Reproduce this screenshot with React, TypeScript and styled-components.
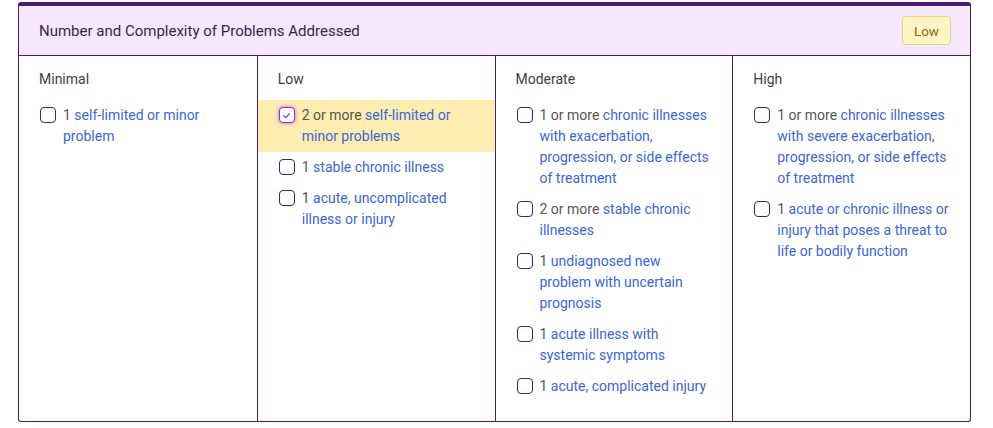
import React from "react";
import styled, { createGlobalStyle, css } from "styled-components";

const Global = createGlobalStyle`
  html, body { margin: 0; padding: 0; background: #ffffff; }
  body { font-family: Roboto, "Liberation Sans", Arial, sans-serif; }
  * { box-sizing: border-box; }
`;

const Page = styled.div`
  padding: 2px 22px 8px 18px;
`;

const Card = styled.section`
  border: 1px solid #4b1c71;
  border-top: 4px solid #4b1c71;
  border-radius: 3px;
  overflow: hidden;
  background: #fff;
`;

const Header = styled.header`
  display: flex;
  align-items: center;
  justify-content: space-between;
  height: 50px;
  padding: 0 19px 0 20px;
  background: #f5e7fc;
  border-bottom: 1px solid #4b1c71;
`;

const Title = styled.h2`
  margin: 0;
  font-size: 15px;
  font-weight: 400;
  color: #3a1f55;
`;

const Badge = styled.span`
  display: inline-flex;
  align-items: center;
  justify-content: center;
  height: 29px;
  padding: 0 11px;
  font-size: 13.5px;
  color: #8a6a00;
  background: #fff4c6;
  border: 1px solid #ead07c;
  border-radius: 4px;
`;

const Grid = styled.div`
  display: grid;
  grid-template-columns: repeat(4, 1fr);
`;

const Column = styled.div`
  padding: 13px 0 19px;
  & + & { border-left: 1px solid #4b1c71; }
`;

const ColTitle = styled.div`
  padding: 0 20px;
  font-size: 14px;
  line-height: 20px;
  color: #3e3e3e;
  margin-bottom: 11px;
`;

const Item = styled.label<{ $checked?: boolean }>`
  display: flex;
  align-items: flex-start;
  gap: 7px;
  padding: 5px 20px 5px 21px;
  font-size: 14px;
  line-height: 21px;
  color: #555;
  cursor: pointer;
  ${(p) => p.$checked && css`background: #fdedb0;`}
`;

const Box = styled.span<{ $checked?: boolean }>`
  flex: none;
  width: 16px;
  height: 16px;
  margin-top: 2px;
  border: 1.5px solid #4b1c71;
  border-radius: 4px;
  background: #fff;
  display: flex;
  align-items: center;
  justify-content: center;
  ${(p) =>
    p.$checked &&
    css`
      border-color: #9a2be0;
      box-shadow: 0 0 3px 1px rgba(154, 43, 224, 0.45);
    `}
`;

const Text = styled.span`
  flex: 1;
`;

const Link = styled.span`
  color: #3b66d8;
`;

type Entry = { pre: string; link: string; checked?: boolean };

const columns: { title: string; items: Entry[] }[] = [
  { title: "Minimal", items: [{ pre: "1", link: "self-limited or minor problem" }] },
  {
    title: "Low",
    items: [
      { pre: "2 or more", link: "self-limited or minor problems", checked: true },
      { pre: "1", link: "stable chronic illness" },
      { pre: "1", link: "acute, uncomplicated illness or injury" },
    ],
  },
  {
    title: "Moderate",
    items: [
      { pre: "1 or more", link: "chronic illnesses with exacerbation, progression, or side effects of treatment" },
      { pre: "2 or more", link: "stable chronic illnesses" },
      { pre: "1", link: "undiagnosed new problem with uncertain prognosis" },
      { pre: "1", link: "acute illness with systemic symptoms" },
      { pre: "1", link: "acute, complicated injury" },
    ],
  },
  {
    title: "High",
    items: [
      { pre: "1 or more", link: "chronic illnesses with severe exacerbation, progression, or side effects of treatment" },
      { pre: "1", link: "acute or chronic illness or injury that poses a threat to life or bodily function" },
    ],
  },
];

const Check = () => (
  <svg width="9" height="9" viewBox="0 0 10 10" fill="none">
    <path d="M2 5.2 L4.2 7.3 L8.2 2.8" stroke="#7a2bb8" strokeWidth="1.3" strokeLinecap="round" strokeLinejoin="round" />
  </svg>
);

export default function App() {
  return (
    <>
      <Global />
      <Page>
        <Card>
          <Header>
            <Title>Number and Complexity of Problems Addressed</Title>
            <Badge>Low</Badge>
          </Header>
          <Grid>
            {columns.map((c) => (
              <Column key={c.title}>
                <ColTitle>{c.title}</ColTitle>
                {c.items.map((it, i) => (
                  <Item key={i} $checked={it.checked}>
                    <Box $checked={it.checked}>{it.checked && <Check />}</Box>
                    <Text>
                      {it.pre} <Link>{it.link}</Link>
                    </Text>
                  </Item>
                ))}
              </Column>
            ))}
          </Grid>
        </Card>
      </Page>
    </>
  );
}
